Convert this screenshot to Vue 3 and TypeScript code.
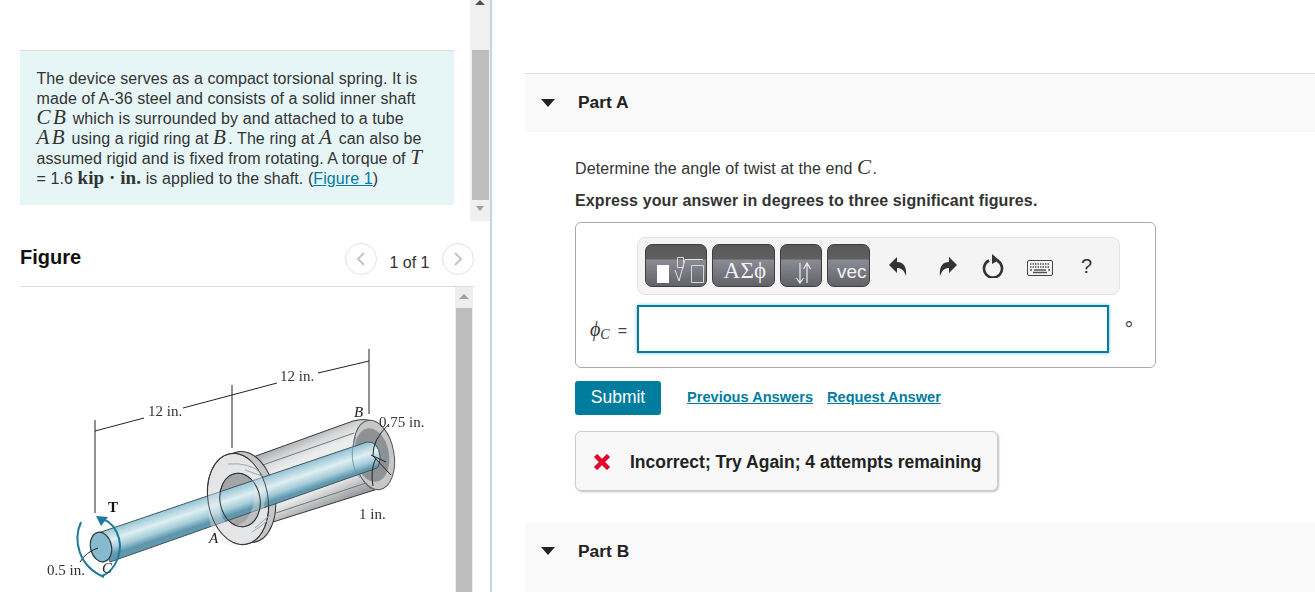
<script setup lang="ts">
interface Label { x: number; y: number; text: string; kind: string }
const labels: Label[] = [
  { x: 148, y: 416, text: '12 in.', kind: 'dim' },
  { x: 280, y: 381, text: '12 in.', kind: 'dim' },
  { x: 354, y: 417, text: 'B', kind: 'ital' },
  { x: 379, y: 427, text: '0.75 in.', kind: 'dim' },
  { x: 359, y: 519, text: '1 in.', kind: 'dim' },
  { x: 108, y: 512, text: 'T', kind: 'bold' },
  { x: 209, y: 543, text: 'A', kind: 'ital' },
  { x: 47, y: 575, text: '0.5 in.', kind: 'dim' },
  { x: 102, y: 573, text: 'C', kind: 'ital' },
]
</script>

<template>
  <div class="page">
    <aside class="left">
      <div class="left-top">
        <div class="left-top-content">
          <div class="intro">
            The device serves as a compact torsional spring. It is<br />
            made of A-36 steel and consists of a solid inner shaft<br />
            <span class="math">CB</span> which is surrounded by and attached to a tube<br />
            <span class="math">AB</span> using a rigid ring at <span class="math">B</span>. The ring at <span class="math">A</span> can also be<br />
            assumed rigid and is fixed from rotating. A torque of <span class="math">T</span><br />
            = 1.6 <span class="unit">kip · in.</span> is applied to the shaft. (<a class="fig-link">Figure 1</a>)
          </div>
        </div>
        <div class="scrollbar top-bar">
          <span class="arrow-up"></span>
          <span class="thumb"></span>
          <span class="arrow-down"></span>
        </div>
      </div>

      <header class="figure-head">
        <h2>Figure</h2>
        <div class="pager">
          <span class="circle">
            <svg width="10" height="16" viewBox="0 0 10 16"><path d="M8 2 2 8l6 6" fill="none" stroke="#c4c4c4" stroke-width="2" /></svg>
          </span>
          <span class="count">1 of 1</span>
          <span class="circle">
            <svg width="10" height="16" viewBox="0 0 10 16"><path d="m2 2 6 6-6 6" fill="none" stroke="#c4c4c4" stroke-width="2" /></svg>
          </span>
        </div>
      </header>

      <div class="figure-body">
        <svg class="diagram" width="435" height="305" viewBox="20 287 435 305">
          <defs>
            <linearGradient id="shaft" gradientUnits="userSpaceOnUse" x1="235" y1="480" x2="245" y2="510">
              <stop offset="0" stop-color="#6aa3b9" />
              <stop offset="0.25" stop-color="#9fcad9" />
              <stop offset="0.55" stop-color="#dfeef2" />
              <stop offset="0.8" stop-color="#a6cedb" />
              <stop offset="1" stop-color="#6198ae" />
            </linearGradient>
            <linearGradient id="tube" gradientUnits="userSpaceOnUse" x1="295" y1="438" x2="325" y2="508">
              <stop offset="0" stop-color="#a4a8ab" />
              <stop offset="0.16" stop-color="#d6d8da" />
              <stop offset="0.3" stop-color="#eceded" />
              <stop offset="0.75" stop-color="#e6e7e8" />
              <stop offset="1" stop-color="#9a9ea0" />
            </linearGradient>
          </defs>

          <g fill="none" stroke="#222" stroke-width="1">
            <path d="M95 420V513M232 385V448M369 349V414" />
            <path d="M95 431 144 418M183 408 232 395 277 383M318 373 369 361" />
          </g>

          <!-- tube -->
          <path d="M253 457 353 421Q378 414 390 440 400 470 384 487L273 522Z" fill="url(#tube)" stroke="#3a3a3a" stroke-width="1" />
          <ellipse cx="374" cy="455" rx="20" ry="35" transform="rotate(-10 374 455)" fill="#c5c7c9" stroke="#555" stroke-width="1" />
          <ellipse cx="372" cy="455" rx="17" ry="27" transform="rotate(-10 372 455)" fill="#8f9294" />
          <path d="M260 466 354 433M276 513 366 483" fill="none" stroke="#777" stroke-width="1" />

          <!-- flange -->
          <ellipse cx="246" cy="497" rx="29" ry="46" transform="rotate(-10 246 497)" fill="#c4c6c8" stroke="#333" stroke-width="1" />
          <ellipse cx="238" cy="499" rx="30" ry="46" transform="rotate(-10 238 499)" fill="#e3e4e5" stroke="#333" stroke-width="1" />
          <ellipse cx="240" cy="500" rx="20" ry="27" transform="rotate(-10 240 500)" fill="#a3a5a7" stroke="#333" stroke-width="1" />

          <!-- shaft -->
          <path d="M98 533 367 442Q378 441 380 456 380 465 377 468L110 562Z" fill="url(#shaft)" stroke="#3a4a52" stroke-width="0.9" />
          <ellipse cx="101" cy="547" rx="10.5" ry="15" transform="rotate(-12 101 547)" fill="#86bacd" stroke="#2c3b42" stroke-width="1.2" />

          <!-- translucent flange over shaft -->
          <path d="M219 471C207 482 204 510 213 531 222 548 240 550 252 538 264 526 270 490 260 470 250 452 230 458 219 471ZM222 486C217 497 218 512 224 520 231 530 244 526 250 514 256 502 256 486 250 478 242 468 228 474 222 486Z" fill="#e8e9ea" fill-opacity="0.4" fill-rule="evenodd" />
          <ellipse cx="240" cy="500" rx="20" ry="27" transform="rotate(-10 240 500)" fill="none" stroke="#333" stroke-width="1" />
          <ellipse cx="238" cy="499" rx="30" ry="46" transform="rotate(-10 238 499)" fill="none" stroke="#333" stroke-width="0.8" />
          <path d="M228 464Q250 462 262 474M252 532Q262 526 268 520M245 470 262 476M255 528 270 515" fill="none" stroke="#a5a5a5" stroke-width="1" />
          <path d="M356 437C350 447 351 469 360 478" fill="none" stroke="#5d8ba0" stroke-width="0.8" />

          <!-- leaders at far end -->
          <g fill="none" stroke="#222" stroke-width="1">
            <path d="M389 424Q372 440 373 456L391 475M371 455 386 462M373 486Q370 470 376 458" />
            <path d="M80 562Q86 552 98 548" />
          </g>

          <!-- torque arrow -->
          <g fill="none" stroke="#1c7a9c" stroke-width="2">
            <path d="M98 518C115 520 124 540 118 558 114 568 108 574 102 576" />
            <path d="M81 522C73 540 78 566 104 577" />
          </g>
          <path d="M96 516 108 517 101 526Z" fill="#1c7a9c" />

          <text v-for="l in labels" :key="l.x + l.text" :x="l.x" :y="l.y" :class="l.kind">{{ l.text }}</text>
        </svg>
        <div class="scrollbar fig-bar">
          <span class="arrow-up"></span>
          <span class="thumb"></span>
        </div>
      </div>
    </aside>

    <main class="right">
      <section class="part part-a">
        <span class="caret"></span>
        <span class="part-name">Part A</span>
      </section>

      <div class="question">
        <p class="prompt">Determine the angle of twist at the end <span class="math">C</span>.</p>
        <p class="instruction">Express your answer in degrees to three significant figures.</p>

        <div class="answer-box">
          <div class="toolbar">
            <button class="tool t1">
              <svg width="60" height="41" viewBox="646 245 60 41">
                <rect x="657" y="265" width="12" height="18" fill="#fff" />
                <path d="M677.5 257.5h6v10h-6zM691.5 265.5h12v17h-12z" fill="none" stroke="#d8d8d8" stroke-width="1" />
                <path d="M675 270 679 281 685 259.5H703" fill="none" stroke="#e4e4e4" stroke-width="1" />
              </svg>
            </button>
            <button class="tool t2">ΑΣϕ</button>
            <button class="tool t3">
              <svg width="18" height="22" viewBox="0 0 18 22">
                <path d="M5 1V20M1.5 16 5 21l3.500-5M12 21V2M8.500 7 12 1l3.500 6" fill="none" stroke="#eee" stroke-width="1.2" />
              </svg>
            </button>
            <button class="tool t4">vec</button>
            <svg class="act undo" width="18" height="20" viewBox="0 0 18 20">
              <path d="M0 8 8 0V5C14 5 18 9 17 19 15 13 12 11 8 11V16Z" fill="#333" />
            </svg>
            <svg class="act redo" width="18" height="20" viewBox="0 0 18 20">
              <path d="M18 8 10 0V5C4 5 0 9 1 19 3 13 6 11 10 11V16Z" fill="#333" />
            </svg>
            <svg class="act reset" width="22" height="24" viewBox="0 0 22 24">
              <path d="M7 6.500A9 9 0 1 0 15 6.500" fill="none" stroke="#333" stroke-width="2.600" />
              <path d="M10 0 17 6 10 10Z" fill="#333" />
            </svg>
            <svg class="act kbd" width="26" height="16" viewBox="0 0 26 16">
              <rect x="0.500" y="0.500" width="25" height="15" rx="1.500" fill="#f4f4f4" stroke="#444" />
              <path d="M3 4h20M3 7h20" stroke="#555" stroke-width="1.600" stroke-dasharray="1.500 1" />
              <path d="M3 10h2M7 10h12M21 10h2M6 12.500h14" stroke="#555" stroke-width="1.500" />
            </svg>
            <span class="help">?</span>
          </div>

          <label class="phi"><span class="phi-sym">ϕ<sub>C</sub></span><span class="eq">=</span></label>
          <input class="answer" type="text" aria-label="answer" />
          <span class="deg">°</span>
        </div>

        <div class="actions">
          <button class="submit">Submit</button>
          <a class="link first">Previous Answers</a>
          <a class="link">Request Answer</a>
        </div>

        <div class="alert">
          <svg width="18" height="16" viewBox="0 0 18 16">
            <path d="M2.500 1.500 15.500 14.500M15.500 1.500 2.500 14.500" stroke="#e4002b" stroke-width="4.500" fill="none" />
          </svg>
          <span>Incorrect; Try Again; 4 attempts remaining</span>
        </div>
      </div>

      <section class="part part-b">
        <span class="caret"></span>
        <span class="part-name">Part B</span>
      </section>
    </main>
  </div>
</template>

<style>
html, body { margin: 0; background: #fff; overflow: hidden; }
</style>

<style scoped>
.page {
  display: flex;
  width: 1315px;
  height: 592px;
  overflow: hidden;
  font-family: "Liberation Sans", Arial, sans-serif;
  font-size: 16px;
  color: #333;
  background: #fff;
}

/* left column */
.left {
  box-sizing: border-box;
  width: 492px;
  flex: none;
  border-right: 2px solid #c6d5e5;
}
.left-top { display: flex; height: 221px; }
.left-top-content { width: 470px; padding: 50px 16px 0 20px; box-sizing: border-box; }
.intro {
  box-sizing: border-box;
  height: 155px;
  padding: 18px 17px 0 16.500px;
  border-top: 1px solid #ddd;
  background: #e6f5f6;
  line-height: 20px;
  white-space: nowrap;
  letter-spacing: 0.085px;
}
.math {
  display: inline-block;
  height: 16px;
  font-family: "Liberation Serif", "Times New Roman", serif;
  font-style: italic;
  font-size: 21px;
  letter-spacing: 2.400px;
  line-height: 16px;
}
.unit {
  display: inline-block;
  height: 16px;
  font-family: "Liberation Serif", "Times New Roman", serif;
  font-weight: bold;
  font-size: 19px;
  line-height: 16px;
}
.fig-link { color: #007c9f; text-decoration: underline; }

.scrollbar {
  display: flex;
  flex-direction: column;
  align-items: center;
  flex: none;
  background: #f0f0f0;
}
.top-bar { width: 20px; height: 221px; }
.thumb { display: block; background: #bdbdbd; }
.top-bar .thumb { width: 17px; height: 150px; margin-top: 45px; }
.arrow-up {
  display: block;
  width: 0;
  height: 0;
  border: 5px solid transparent;
  border-top: 0;
  border-bottom: 5px solid #505050;
}
.arrow-down {
  display: block;
  width: 0;
  height: 0;
  margin-top: 6px;
  border: 4px solid transparent;
  border-bottom: 0;
  border-top: 5px solid #a0a0a0;
}

.figure-head {
  box-sizing: border-box;
  width: 454px;
  height: 66px;
  margin-left: 20px;
  padding-top: 20px;
  display: flex;
  justify-content: space-between;
  align-items: flex-start;
  border-bottom: 1px solid #ddd;
}
.figure-head h2 {
  margin: 2px 0 0;
  font-size: 20px;
  line-height: 28px;
  font-weight: bold;
  color: #111;
}
.pager { display: flex; align-items: center; height: 36px; }
.circle {
  box-sizing: border-box;
  width: 32px;
  height: 32px;
  border: 1px solid #e2e2e2;
  border-radius: 50%;
  display: flex;
  align-items: center;
  justify-content: center;
}
.count { width: 65px; text-align: center; font-size: 16px; margin-top: 8px; }

.figure-body { display: flex; margin-left: 20px; width: 454px; height: 305px; }
.diagram { display: block; flex: none; filter: blur(0.55px); }
.diagram text { font-family: "Liberation Serif", "Times New Roman", serif; font-size: 15px; fill: #333; }
.diagram .ital { font-style: italic; fill: #222; }
.diagram .bold { font-weight: bold; fill: #111; }
.fig-bar { width: 18px; height: 305px; margin-left: 0; background: #eee; }
.fig-bar .arrow-up { margin-top: 7px; border-bottom-color: #a0a0a0; }
.fig-bar .thumb { width: 16px; height: 290px; margin-top: 9px; }

/* right column */
.right { width: 790px; margin-left: 33px; flex: none; }
.part {
  display: flex;
  align-items: center;
  background: #f9f9f9;
  padding-left: 16px;
}
.part-a { margin-top: 73px; height: 59px; box-sizing: border-box; border-top: 1px solid #ddd; }
.part-b { height: 69px; margin-top: 32px; align-items: flex-start; padding-top: 19px; box-sizing: border-box; }
.caret {
  width: 0;
  height: 0;
  border: 7px solid transparent;
  border-bottom: 0;
  border-top: 8px solid #222;
}
.part-b .caret { margin-top: 5px; }
.part-name { margin-left: 23px; margin-top: -2px; font-weight: bold; font-size: 17.400px; color: #222; line-height: 18px; }
.part-b .part-name { margin-top: 0; }

.question { padding-left: 50px; height: 359px; box-sizing: border-box; }
.prompt { margin: 0; padding-top: 27px; line-height: 20px; letter-spacing: 0.09px; }
.prompt .math { letter-spacing: 1.500px; }
.instruction { margin: 12px 0 0; font-weight: bold; line-height: 20px; letter-spacing: 0.12px; }

.answer-box {
  box-sizing: border-box;
  width: 581px;
  height: 146px;
  margin-top: 11px;
  padding: 14px 0 0;
  border: 1px solid #aaa;
  border-radius: 6px;
  display: grid;
  grid-template-columns: 61px 472px 1fr;
  grid-template-rows: 58px 48px;
  row-gap: 10px;
}
.toolbar {
  grid-column: 2 / 4;
  box-sizing: border-box;
  width: 483px;
  height: 58px;
  padding-left: 7px;
  display: flex;
  align-items: center;
  background: #f4f4f4;
  border: 1px solid #e2e2e2;
  border-radius: 8px;
}
.tool {
  box-sizing: border-box;
  height: 43px;
  margin: -1px 5px 0 0;
  padding: 0;
  flex: none;
  overflow: hidden;
  border: 1px solid #3e3e3e;
  border-radius: 7px;
  color: #f2f2f2;
  background: linear-gradient(#595959 0, #5f5f5f 14px, #8b8b94 15px, #62626a 100%);
}
.t1 { width: 62px; }
.t1 svg { display: block; }
.t2 {
  width: 63px;
  padding: 10px 0 0 3px;
  font-family: "Liberation Serif", "Times New Roman", serif;
  font-size: 23px;
  line-height: 30px;
  letter-spacing: 0.3px;
}
.t3 { width: 42px; padding: 15px 0 0 5px; }
.t3 svg { display: block; margin: 0 auto; }
.t4 {
  width: 43px;
  padding: 12px 0 0 9px;
  font-family: "Liberation Sans", Arial, sans-serif;
  font-size: 19px;
  line-height: 28px;
  text-align: left;
}
.act { flex: none; display: block; }
.undo { margin-left: 14px; margin-top: 1px; }
.redo { margin-left: 32px; margin-top: 1px; }
.reset { margin-left: 25px; margin-top: -1px; }
.kbd { margin-left: 23px; margin-top: 3px; }
.help { margin-left: 28px; font-size: 20px; color: #333; line-height: 24px; }

.phi {
  grid-column: 1;
  padding-left: 14px;
  align-self: center;
  font-size: 16px;
  color: #444;
  white-space: nowrap;
}
.phi-sym {
  font-family: "Liberation Serif", "Times New Roman", serif;
  font-style: italic;
  font-size: 20px;
  color: #333;
}
.phi-sym sub { font-size: 14px; vertical-align: -3px; line-height: 0; }
.eq { margin-left: 8px; font-size: 16px; }
.answer {
  box-sizing: border-box;
  width: 472px;
  height: 48px;
  padding: 0;
  border: 2px solid #007c9f;
  outline: none;
  background: #fff;
  box-shadow: 0 0 3px rgba(0, 124, 159, 0.55);
}
.deg { align-self: center; text-align: center; padding-right: 6px; font-size: 22px; line-height: 18px; color: #444; margin-top: 1px; font-weight: normal; }

.actions { display: flex; align-items: center; margin-top: 13px; }
.submit {
  box-sizing: border-box;
  width: 86px;
  height: 34px;
  padding: 0 0 2px;
  border: 0;
  border-radius: 3px;
  background: #007c9f;
  color: #fff;
  font-family: "Liberation Sans", Arial, sans-serif;
  font-size: 17.500px;
}
.link {
  margin-left: 14px;
  margin-top: -3px;
  color: #007c9f;
  font-size: 14.600px;
  font-weight: bold;
  text-decoration: underline;
}
.link.first { margin-left: 26px; }

.alert {
  box-sizing: border-box;
  width: 423px;
  height: 60px;
  margin-top: 16px;
  padding-left: 17px;
  padding-top: 2px;
  display: flex;
  align-items: center;
  gap: 19px;
  background: #f8f8f8;
  border: 1px solid #ccc;
  border-radius: 6px;
  box-shadow: 1px 1px 2px rgba(0, 0, 0, 0.25);
  font-size: 17.500px;
  font-weight: bold;
  color: #222;
  white-space: nowrap;
}
</style>
